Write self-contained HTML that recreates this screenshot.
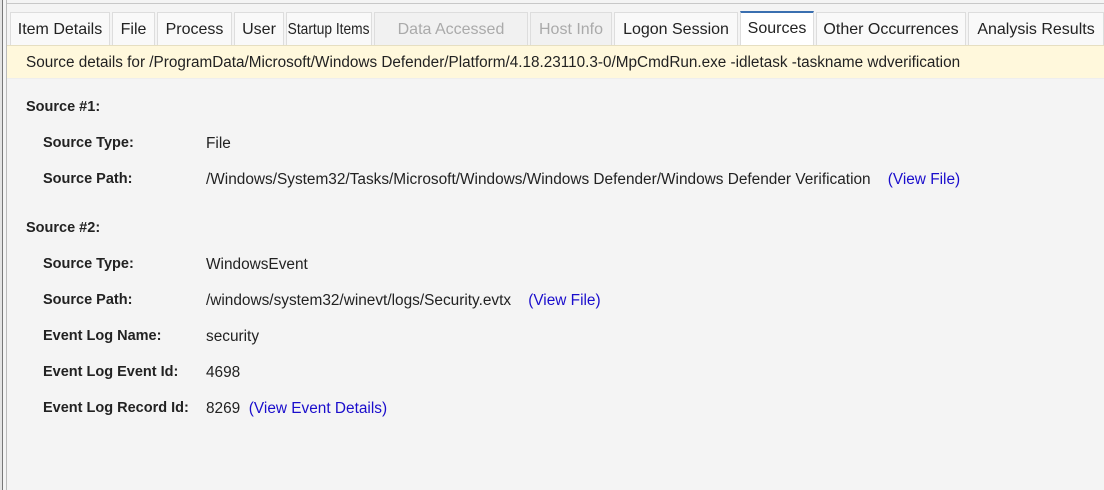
<!DOCTYPE html><html><head><style>
body{margin:0;width:1104px;height:490px;background:#f4f4f4;font-family:"Liberation Sans",sans-serif;position:relative;overflow:hidden;font-size:15px;color:#222}
.lb{position:absolute;left:0;top:0;width:2px;height:490px;background:#e4e4e4}
.lb2{position:absolute;left:2px;top:0;width:1px;height:490px;background:#777}
.lb3{position:absolute;left:6px;top:0;width:1px;height:490px;background:#bbb}
.tl{position:absolute;left:7px;top:3px;right:0;height:1px;background:#c8c8c8}
.tab{position:absolute;top:12px;height:33px;line-height:34px;background:#f9f9f9;border:1px solid #ddd;border-bottom:none;text-align:center;font-size:16px;color:#222;box-sizing:border-box;white-space:nowrap;overflow:hidden}
.dis{color:#aaa;background:#f1f1f1}
.sel{background:#fff;border-top:2px solid #3a6fb0;height:35px;top:11px;line-height:32px}
.ban{position:absolute;left:7px;top:45px;right:0;height:32px;background:#fff8dc;border-top:1px solid #e6dfc2;border-bottom:1px solid #eee;line-height:33px;padding-left:19px;font-size:15.3px;white-space:nowrap}
.t{position:absolute;font-size:15.4px;white-space:nowrap}
.b{font-weight:bold;font-size:14.5px}
a{color:#1a0dcc;text-decoration:none}
</style></head><body>
<div class="lb"></div><div class="lb2"></div><div class="lb3"></div><div class="tl"></div>
<div class="tab" style="left:10px;width:100px">Item Details</div>
<div class="tab" style="left:112px;width:43px">File</div>
<div class="tab" style="left:157px;width:75px">Process</div>
<div class="tab" style="left:234px;width:50px">User</div>
<div class="tab" style="left:286px;width:86px"><span style="display:inline-block;transform:scaleX(0.86);margin:0 -8px">Startup Items</span></div>
<div class="tab dis" style="left:374px;width:154px">Data Accessed</div>
<div class="tab dis" style="left:530px;width:82px">Host Info</div>
<div class="tab" style="left:614px;width:124px">Logon Session</div>
<div class="tab sel" style="left:740px;width:74px">Sources</div>
<div class="tab" style="left:816px;width:150px">Other Occurrences</div>
<div class="tab" style="left:968px;width:136px">Analysis Results</div>
<div class="ban">Source details for /ProgramData/Microsoft/Windows Defender/Platform/4.18.23110.3-0/MpCmdRun.exe -idletask -taskname wdverification</div>
<div class="t b" style="left:26px;top:99px">Source #1:</div>
<div class="t b" style="left:43px;top:135px">Source Type:</div><div class="t" style="left:206px;top:135px">File</div>
<div class="t b" style="left:43px;top:171px">Source Path:</div><div class="t" style="left:206px;top:171px">/Windows/System32/Tasks/Microsoft/Windows/Windows Defender/Windows Defender Verification &nbsp;&nbsp;&nbsp;<a>(View File)</a></div>
<div class="t b" style="left:26px;top:220px">Source #2:</div>
<div class="t b" style="left:43px;top:256px">Source Type:</div><div class="t" style="left:206px;top:256px">WindowsEvent</div>
<div class="t b" style="left:43px;top:292px">Source Path:</div><div class="t" style="left:206px;top:292px">/windows/system32/winevt/logs/Security.evtx &nbsp;&nbsp;&nbsp;<a>(View File)</a></div>
<div class="t b" style="left:43px;top:328px">Event Log Name:</div><div class="t" style="left:206px;top:328px">security</div>
<div class="t b" style="left:43px;top:364px">Event Log Event Id:</div><div class="t" style="left:206px;top:364px">4698</div>
<div class="t b" style="left:43px;top:400px">Event Log Record Id:</div><div class="t" style="left:206px;top:400px">8269 &nbsp;<a>(View Event Details)</a></div>
</body></html>
